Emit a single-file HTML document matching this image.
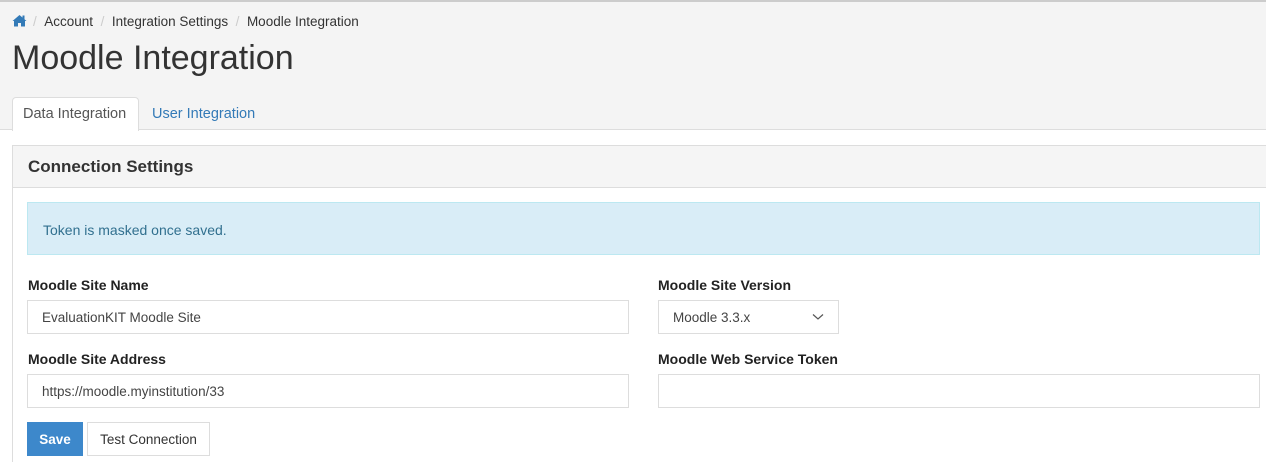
<!DOCTYPE html>
<html><head><style>
*{box-sizing:border-box;margin:0;padding:0}
html,body{width:1266px;height:462px;overflow:hidden}
body{background:#fff;font-family:"Liberation Sans",sans-serif;color:#333;position:relative}
.top{position:absolute;left:0;top:0;width:1266px;height:130px;background:#f4f4f4;border-top:2px solid #ccc;border-bottom:1px solid #ddd}
.abs{position:absolute;white-space:nowrap}
.bc{top:14px;font-size:13.5px;color:#333}
.sep{color:#ccc}
h1{position:absolute;left:12px;top:39px;font-size:34px;font-weight:normal;color:#333;white-space:nowrap}
.tab{position:absolute;left:12px;top:97px;width:127px;height:34px;background:#fff;border:1px solid #ddd;border-bottom:none;border-radius:4px 4px 0 0;font-size:14.5px;color:#555;padding:8px 0 0 10px;white-space:nowrap}
.tab2{left:152px;top:106px;font-size:14.5px;color:#337ab7}
.panel{position:absolute;left:12px;top:145px;width:1260px;height:330px;border:1px solid #ddd}
.ph{height:42px;background:#f5f5f5;border-bottom:1px solid #ddd;font-size:17px;font-weight:bold;padding:11px 0 0 15px;color:#333}
.alert{position:absolute;left:27px;top:202px;width:1233px;height:53px;background:#d9edf7;border:1px solid #bce8f1;color:#31708f;font-size:14px;padding:19px 0 0 15px}
.lbl{font-size:14px;font-weight:bold;color:#222}
.inp{position:absolute;height:34px;border:1px solid #ddd;background:#fff;font-size:13.5px;color:#444;padding:9px 0 0 14px;white-space:nowrap}
.btn{position:absolute;top:422px;height:34px;font-size:13.5px;padding:10px 0 0 0;text-align:center}
</style></head><body>
<div class="top"></div>
<svg class="abs" style="left:12px;top:14px" width="15" height="13" viewBox="0 0 15 13"><path d="M7.5 1 L0.5 7 L2 7 L2 12.5 L6 12.5 L6 9 L9 9 L9 12.5 L13 12.5 L13 7 L14.5 7 Z" fill="#337ab7"/><rect x="10.5" y="1.5" width="2" height="4" fill="#337ab7"/></svg>
<div class="abs bc" style="left:33px"><span class="sep">/</span>&nbsp;&nbsp;Account&nbsp;&nbsp;<span class="sep">/</span>&nbsp;&nbsp;Integration Settings&nbsp;&nbsp;<span class="sep">/</span>&nbsp;&nbsp;Moodle Integration</div>
<h1>Moodle Integration</h1>
<div class="tab">Data Integration</div>
<div class="abs tab2">User Integration</div>
<div class="panel"><div class="ph">Connection Settings</div></div>
<div class="alert">Token is masked once saved.</div>
<div class="abs lbl" style="left:28px;top:277px">Moodle Site Name</div>
<div class="abs lbl" style="left:658px;top:277px">Moodle Site Version</div>
<div class="inp" style="left:27px;top:300px;width:602px">EvaluationKIT Moodle Site</div>
<div class="inp" style="left:658px;top:300px;width:181px">Moodle 3.3.x<svg style="position:absolute;left:153px;top:12px" width="12" height="8" viewBox="0 0 12 8"><path d="M1 1.5 L6 6 L11 1.5" fill="none" stroke="#555" stroke-width="1.2"/></svg></div>
<div class="abs lbl" style="left:28px;top:351px">Moodle Site Address</div>
<div class="abs lbl" style="left:658px;top:351px">Moodle Web Service Token</div>
<div class="inp" style="left:27px;top:374px;width:602px">https://moodle.myinstitution/33</div>
<div class="inp" style="left:658px;top:374px;width:602px"></div>
<div class="btn" style="left:27px;width:56px;background:#3d88cb;color:#fff;font-weight:bold">Save</div>
<div class="btn" style="left:87px;width:123px;background:#fff;border:1px solid #ddd;color:#333;padding-top:9px">Test Connection</div>
</body></html>
